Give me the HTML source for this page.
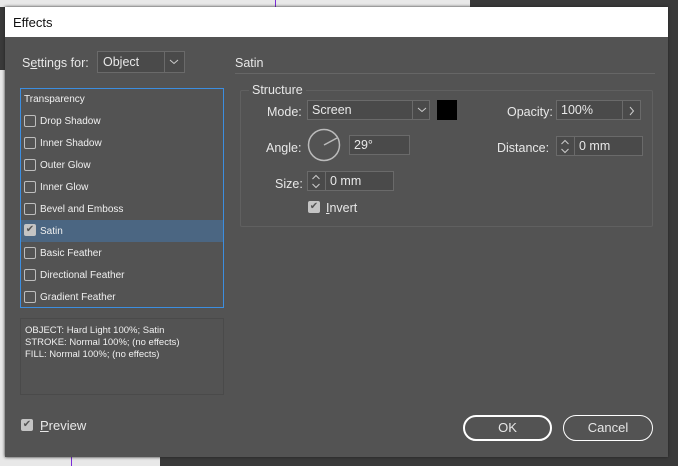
<!DOCTYPE html><html><head><style>
*{box-sizing:border-box;margin:0;padding:0}
body{width:678px;height:466px;overflow:hidden;background:#3a3a3a;font-family:"Liberation Sans",sans-serif;position:relative;color:#e6e6e6}
.a{position:absolute}
.dlg{left:5px;top:7px;width:663px;height:450px;background:#535353;box-shadow:0 0 3px #222}
.title{left:0;top:0;width:663px;height:30px;background:#fff;color:#111;font-size:13px;padding:8px 8px}
.t{font-size:12.5px;color:#e8e8e8;white-space:nowrap}
.s{font-size:10px;color:#f0f0f0;white-space:nowrap}
.box{border:1px solid #6a6a6a;background:#464646}
.cb{width:12px;height:12px;border:1px solid #bdbdbd;border-radius:2px}
.cbc{width:12px;height:12px;background:#c4c4c4;border-radius:2px;color:#555;font-size:10px;line-height:12px;text-align:center}
.btn{border:2px solid #fff;border-radius:14px;height:26px;text-align:center;line-height:22px;font-size:13px}
svg.i{position:absolute}
</style></head><body>
<div class="a" style="left:0;top:0;width:470px;height:7px;background:#e8e8e8"></div>
<div class="a" style="left:275px;top:0;width:1px;height:7px;background:#7a2bd8"></div>
<div class="a" style="left:0;top:456px;width:160px;height:10px;background:#e8e8e8"></div>
<div class="a" style="left:71px;top:456px;width:1px;height:10px;background:#7a2bd8"></div>
<div class="a" style="left:0;top:70px;width:5px;height:390px;background:#e8e8e8"></div>
<div class="a dlg">
<div class="a title">Effects</div>
<div class="a t" style="left:17px;top:49px">S<u>e</u>ttings for:</div>
<div class="a box" style="left:92px;top:44px;width:88px;height:22px;background:#4a4a4a"><span class="a t" style="left:5px;top:3px">Object</span><div class="a" style="left:66px;top:0;width:1px;height:20px;background:#6a6a6a"></div><svg class="i" style="left:71px;top:7px" width="10" height="6"><path d="M1 1l4 3.5 4-3.5" fill="none" stroke="#ccc"/></svg></div>
<div class="a t" style="left:230px;top:49px">Satin</div>
<div class="a" style="left:230px;top:66px;width:420px;height:1px;background:#666"></div>
<div class="a" style="left:15px;top:81px;width:204px;height:220px;border:1px solid #3c8ee0"></div>
<div class="a s" style="left:19px;top:87px">Transparency</div>
<div class="a" style="left:16px;top:213px;width:202px;height:22px;background:#4b6682"></div>
<div class="a cb" style="left:19px;top:108px"></div><div class="a s" style="left:35px;top:109px">Drop Shadow</div>
<div class="a cb" style="left:19px;top:130px"></div><div class="a s" style="left:35px;top:131px">Inner Shadow</div>
<div class="a cb" style="left:19px;top:152px"></div><div class="a s" style="left:35px;top:153px">Outer Glow</div>
<div class="a cb" style="left:19px;top:174px"></div><div class="a s" style="left:35px;top:175px">Inner Glow</div>
<div class="a cb" style="left:19px;top:196px"></div><div class="a s" style="left:35px;top:197px">Bevel and Emboss</div>
<div class="a cbc" style="left:19px;top:217px">&#10004;</div><div class="a s" style="left:35px;top:219px">Satin</div>
<div class="a cb" style="left:19px;top:240px"></div><div class="a s" style="left:35px;top:241px">Basic Feather</div>
<div class="a cb" style="left:19px;top:262px"></div><div class="a s" style="left:35px;top:263px">Directional Feather</div>
<div class="a cb" style="left:19px;top:284px"></div><div class="a s" style="left:35px;top:285px">Gradient Feather</div>
<div class="a" style="left:15px;top:311px;width:204px;height:77px;border:1px solid #4a4a4a"></div>
<div class="a s" style="left:20px;top:318px;line-height:12px;font-size:9.5px">OBJECT: Hard Light 100%; Satin<br>STROKE: Normal 100%; (no effects)<br>FILL: Normal 100%; (no effects)</div>
<div class="a" style="left:235px;top:83px;width:413px;height:137px;border:1px solid #606060;border-radius:2px"></div>
<div class="a t" style="left:244px;top:76px;background:#535353;padding:0 3px">Structure</div>
<div class="a t" style="left:262px;top:98px">Mode:</div>
<div class="a box" style="left:302px;top:93px;width:123px;height:20px;background:#4a4a4a"><span class="a t" style="left:4px;top:2px">Screen</span><div class="a" style="left:104px;top:0;width:1px;height:18px;background:#6a6a6a"></div><svg class="i" style="left:109px;top:6px" width="10" height="6"><path d="M1 1l4 3.5 4-3.5" fill="none" stroke="#ccc"/></svg></div>
<div class="a" style="left:432px;top:93px;width:20px;height:20px;background:#000"></div>
<div class="a t" style="left:502px;top:98px">Opacity:</div>
<div class="a box" style="left:551px;top:93px;width:85px;height:20px;background:#4a4a4a"><span class="a t" style="left:4px;top:2px">100%</span><div class="a" style="left:65px;top:0;width:1px;height:18px;background:#6a6a6a"></div><svg class="i" style="left:72px;top:5px" width="6" height="10"><path d="M1 1l3.5 4-3.5 4" fill="none" stroke="#ccc"/></svg></div>
<div class="a t" style="left:261px;top:134px">Angle:</div>
<svg class="a" style="left:302px;top:121px" width="34" height="34"><circle cx="17" cy="17" r="15.5" fill="none" stroke="#bbb" stroke-width="1.5"/><line x1="17" y1="17" x2="30" y2="10" stroke="#bbb" stroke-width="1.5"/></svg>
<div class="a box" style="left:344px;top:128px;width:61px;height:20px;background:#4a4a4a"><span class="a t" style="left:4px;top:2px">29°</span></div>
<div class="a t" style="left:492px;top:134px">Distance:</div>
<div class="a box" style="left:551px;top:129px;width:87px;height:20px;background:#4a4a4a"><div class="a" style="left:17px;top:0;width:1px;height:18px;background:#6a6a6a"></div><svg class="i" style="left:3px;top:2px" width="10" height="15"><path d="M1.5 5l3.5-3.5 3.5 3.5M1.5 10l3.5 3.5 3.5-3.5" fill="none" stroke="#ccc"/></svg><span class="a t" style="left:22px;top:2px">0 mm</span></div>
<div class="a t" style="left:270px;top:170px">Size:</div>
<div class="a box" style="left:302px;top:164px;width:87px;height:20px;background:#4a4a4a"><div class="a" style="left:17px;top:0;width:1px;height:18px;background:#6a6a6a"></div><svg class="i" style="left:3px;top:2px" width="10" height="15"><path d="M1.5 5l3.5-3.5 3.5 3.5M1.5 10l3.5 3.5 3.5-3.5" fill="none" stroke="#ccc"/></svg><span class="a t" style="left:22px;top:2px">0 mm</span></div>
<div class="a cbc" style="left:303px;top:194px">&#10004;</div><div class="a t" style="left:321px;top:194px"><u>I</u>nvert</div>
<div class="a cbc" style="left:16px;top:412px">&#10004;</div><div class="a t" style="left:35px;top:411px;font-size:13px"><u>P</u>review</div>
<div class="a btn" style="left:458px;top:408px;width:89px">OK</div>
<div class="a btn" style="left:558px;top:408px;width:90px;border-width:1px;line-height:24px">Cancel</div>
</div>
</body></html>
